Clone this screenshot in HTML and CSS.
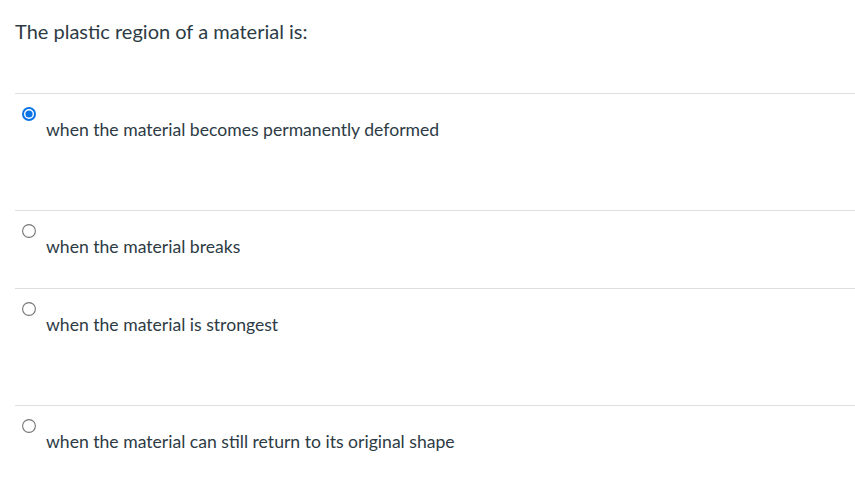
FILE: index.html
```html
<!DOCTYPE html>
<html lang="en">
<head>
<meta charset="utf-8">
<title>Quiz question</title>
<link rel="stylesheet" href="styles.css">
</head>
<body>
<div class="question">
  <p class="question-text">The plastic region of a material is:</p>
  <div class="answers">
    <div class="answer answer--tall">
      <span class="radio">
        <svg width="14" height="14" viewBox="0 0 14 14"><circle cx="7" cy="7" r="6" fill="#fff" stroke="#0b74e5" stroke-width="2"/><circle cx="7" cy="7" r="3.6" fill="#0b74e5"/></svg>
      </span>
      <div class="answer-text">when the material becomes permanently deformed</div>
    </div>
    <div class="answer">
      <span class="radio">
        <svg width="14" height="14" viewBox="0 0 14 14"><circle cx="7" cy="7" r="6.4" fill="#fff" stroke="#767676" stroke-width="1.1"/></svg>
      </span>
      <div class="answer-text">when the material breaks</div>
    </div>
    <div class="answer answer--tall">
      <span class="radio">
        <svg width="14" height="14" viewBox="0 0 14 14"><circle cx="7" cy="7" r="6.4" fill="#fff" stroke="#767676" stroke-width="1.1"/></svg>
      </span>
      <div class="answer-text">when the material is strongest</div>
    </div>
    <div class="answer answer--tall">
      <span class="radio">
        <svg width="14" height="14" viewBox="0 0 14 14"><circle cx="7" cy="7" r="6.4" fill="#fff" stroke="#767676" stroke-width="1.1"/></svg>
      </span>
      <div class="answer-text">when the material can still return to its original shape</div>
    </div>
  </div>
</div>
</body>
</html>
```
FILE: styles.css
```css
html, body {
  margin: 0;
  padding: 0;
  background: #fff;
}
body {
  font-family: Lato, "Open Sans", sans-serif;
  color: #2d3b45;
}
.question {
  padding-left: 15px;
}
.question-text {
  margin: 19px 0 0 0;
  font-size: 20px;
  line-height: 24px;
  height: 24px;
}
.answers {
  margin-top: 50px;
}
.answer {
  border-top: 1px solid #dedede;
  padding-top: 13px;
  padding-bottom: 31px;
}
.answer--tall {
  padding-bottom: 70px;
}
.radio {
  display: block;
  width: 14px;
  height: 14px;
  margin-left: 7px;
}
.radio svg {
  display: block;
}
.answer-text {
  margin-top: -2px;
  padding-left: 31px;
  font-size: 17.6px;
  line-height: 21px;
}
```
